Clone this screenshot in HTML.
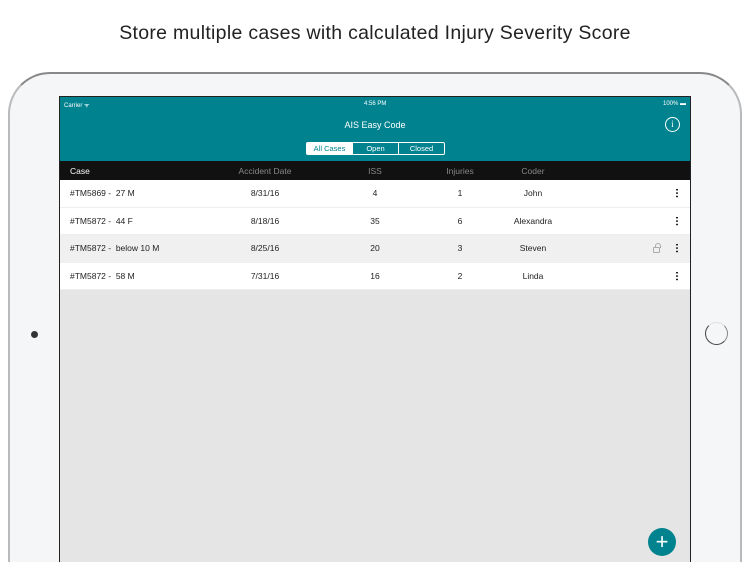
<!DOCTYPE html>
<html><head><meta charset="utf-8"><style>
*{margin:0;padding:0;box-sizing:border-box}
html,body{width:750px;height:562px;overflow:hidden;background:#fff}
.wrap{width:750px;height:562px;position:relative;overflow:hidden;font-family:"Liberation Sans",sans-serif}
.head{position:absolute;top:22px;left:0;width:750px;text-align:center;font-size:19.5px;color:#222;letter-spacing:0.3px}
.frame{position:absolute;left:8px;top:72px;width:734px;height:490px;border-radius:42px 42px 0 0;background:#f5f6f8;border:2px solid #b9babc;border-bottom:none;border-top-color:#888}
.cam{position:absolute;left:31px;top:331px;width:7px;height:7px;border-radius:50%;background:#333}
.home{position:absolute;left:705px;top:322px;width:23px;height:23px;border-radius:50%;border:1.5px solid #444;border-top-color:#e0e0e0;border-right-color:#888}
.screen{position:absolute;left:59px;top:96px;width:632px;height:466px;border:1.5px solid #222;border-bottom:none;background:#e5e5e5;overflow:hidden}
.bar{background:#00838f;height:64px;position:relative;color:#fff}
.sb{font-size:6px;position:absolute;top:4px}
.title{position:absolute;top:23px;width:100%;text-align:center;font-size:9px}
.info{position:absolute;right:10px;top:20px;width:15px;height:15px;border:1px solid #fff;border-radius:50%;font-size:9px;text-align:center;line-height:13px;font-family:"Liberation Serif",serif}
.seg{position:absolute;left:246px;top:45px;width:139px;height:13px;border:1px solid #fff;border-radius:2px;display:flex;font-size:7.5px}
.seg div{flex:1;text-align:center;line-height:11px;border-left:1px solid #fff}
.seg div:first-child{background:#fff;color:#00838f;border:none}
.th{background:#111;height:19px;color:#888;font-size:8.5px;position:relative}
.th span,.row span{position:absolute;top:50%;transform:translate(-50%,-50%);white-space:nowrap}
.row{height:27.5px;background:#fff;border-bottom:1px solid #eee;position:relative;font-size:8.5px;color:#222}
.row.g{background:#f0f0f0}
.l{transform:translate(0,-50%)!important}
.dots{position:absolute;right:12px;top:8px;width:2px;height:10px;background:radial-gradient(circle,#222 0.9px,transparent 1px) 0 0/2px 3.4px}
.lock{position:absolute;right:30px;top:12px;width:7px;height:6px;border:1px solid #aaa;border-radius:1px}
.lock:before{content:"";position:absolute;left:0.5px;top:-5px;width:4px;height:4px;border:1px solid #aaa;border-bottom:none;border-radius:3px 3px 0 0}
.fab{position:absolute;left:588px;top:431px;width:28px;height:28px;border-radius:50%;background:#00838f;color:#fff;font-size:22px;text-align:center;line-height:27px}
</style></head><body><div class="wrap">
<div class="head">Store multiple cases with calculated Injury Severity Score</div>
<div class="frame"></div>
<div class="cam"></div>
<div class="home"></div>
<div class="screen">
 <div class="bar">
  <div class="sb" style="left:4px">Carrier ᯤ</div>
  <div class="sb" style="left:304px">4:56 PM</div>
  <div class="sb" style="right:4px">100% ▬</div>
  <div class="title">AIS Easy Code</div>
  <div class="info">i</div>
  <div class="seg"><div>All Cases</div><div>Open</div><div>Closed</div></div>
 </div>
 <div class="th"><span class="l" style="left:10px;color:#fff">Case</span><span style="left:205px">Accident Date</span><span style="left:315px">ISS</span><span style="left:400px">Injuries</span><span style="left:473px">Coder</span></div>
 <div class="row"><span class="l" style="left:10px">#TM5869 -&nbsp; 27 M</span><span style="left:205px">8/31/16</span><span style="left:315px">4</span><span style="left:400px">1</span><span style="left:473px">John</span><i class="dots"></i></div>
 <div class="row"><span class="l" style="left:10px">#TM5872 -&nbsp; 44 F</span><span style="left:205px">8/18/16</span><span style="left:315px">35</span><span style="left:400px">6</span><span style="left:473px">Alexandra</span><i class="dots"></i></div>
 <div class="row g"><span class="l" style="left:10px">#TM5872 -&nbsp; below 10 M</span><span style="left:205px">8/25/16</span><span style="left:315px">20</span><span style="left:400px">3</span><span style="left:473px">Steven</span><i class="lock"></i><i class="dots"></i></div>
 <div class="row"><span class="l" style="left:10px">#TM5872 -&nbsp; 58 M</span><span style="left:205px">7/31/16</span><span style="left:315px">16</span><span style="left:400px">2</span><span style="left:473px">Linda</span><i class="dots"></i></div>
 <div class="fab">+</div>
</div>
</div></body></html>
